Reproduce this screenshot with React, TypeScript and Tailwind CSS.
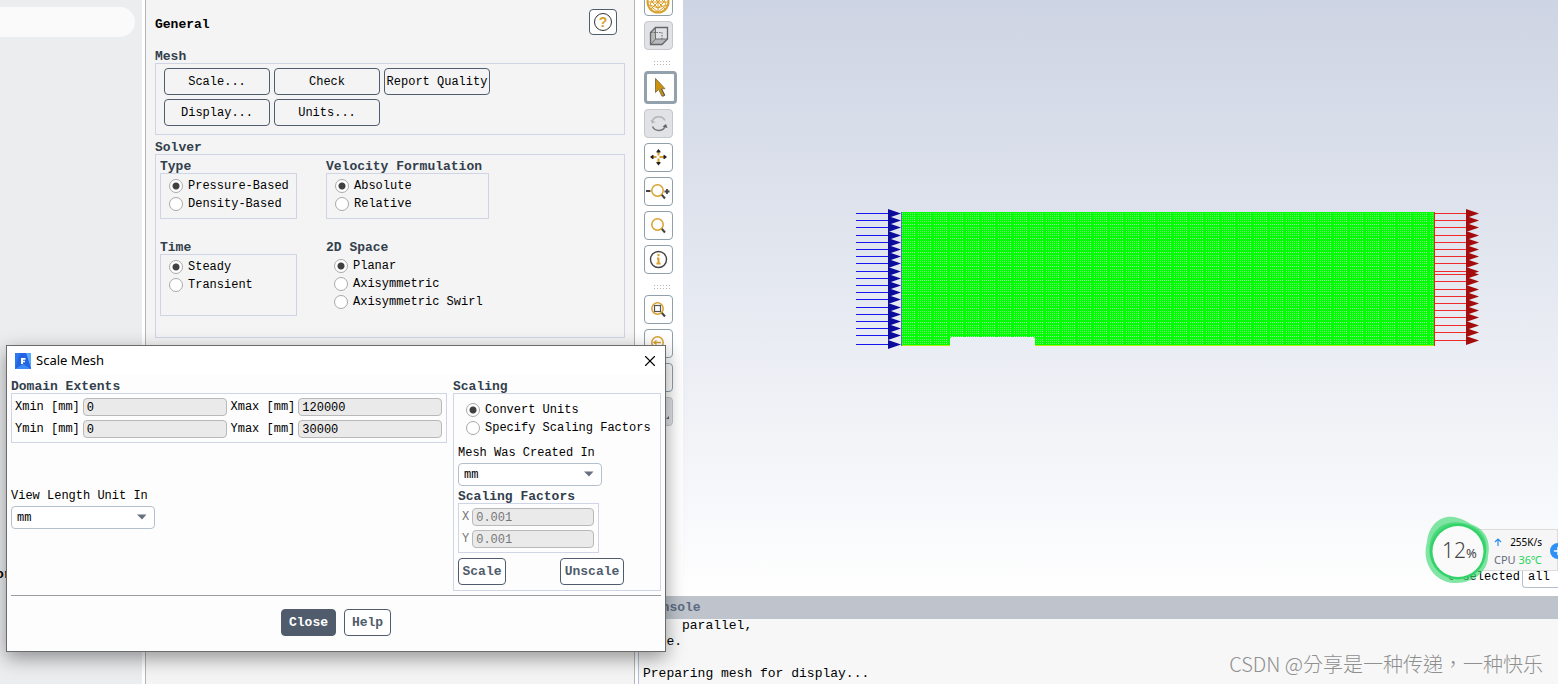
import type { ReactNode } from "react";
import { X, Plus } from "lucide-react";

const MONO = "font-['Liberation_Mono','Noto_Sans_CJK_SC',monospace]";

function Caption({ children }: { children: ReactNode }) {
  return <h3 className="h-4 text-[13px] leading-5 font-bold whitespace-nowrap text-[#333f4d]">{children}</h3>;
}

function Radio({ name, label, checked }: { name: string; label: string; checked?: boolean }) {
  return (
    <label className="flex h-[18px] items-center gap-[5px] text-xs whitespace-nowrap text-black">
      <input
        type="radio"
        name={name}
        defaultChecked={checked}
        className="size-3.5 shrink-0 appearance-none rounded-full border border-[#a9a9a9] bg-white checked:bg-[radial-gradient(circle,#404040_0_3px,#ffffff_4px)]"
      />
      {label}
    </label>
  );
}

function PanelButton({ children }: { children: ReactNode }) {
  return (
    <button className="h-[27px] w-[106px] rounded border border-[#4f5d6e] text-xs whitespace-nowrap text-black">
      {children}
    </button>
  );
}

function BoldButton({ children, className }: { children: ReactNode; className: string }) {
  return (
    <button className={`h-[27px] rounded border border-[#505c6b] text-[13px] font-bold ${className}`}>{children}</button>
  );
}

function Field({ label, value, disabled }: { label: string; value: string; disabled?: boolean }) {
  return (
    <label className={`flex min-w-0 flex-1 items-center gap-[3px] text-xs whitespace-pre ${disabled ? "text-[#777]" : "text-black"}`}>
      <span className="shrink-0">{label}</span>
      <input
        readOnly
        disabled={disabled}
        defaultValue={value}
        className="h-[18px] w-full min-w-0 flex-1 rounded border border-[#b9b9b9] bg-[#eaeaea] px-[3px] pt-[2px]"
      />
    </label>
  );
}

function UnitSelect({ label }: { label: string }) {
  return (
    <label className="block w-36 text-xs text-black">
      <span className="block h-[18px] leading-4 whitespace-nowrap">{label}</span>
      <span className="relative block">
        <select className="h-[23px] w-full appearance-none rounded border border-[#b4c0cd] bg-white px-[5px] pt-px">
          <option>mm</option>
          <option>m</option>
        </select>
        <svg className="pointer-events-none absolute top-2 right-2" width="10" height="6" viewBox="0 0 10 6">
          <path d="M0 0.5h9.500L5 5.500z" fill="#667080" />
        </svg>
      </span>
    </label>
  );
}

function ToolButton({ label, variant = "plain", children }: { label: string; variant?: "plain" | "muted" | "active"; children?: ReactNode }) {
  const look = {
    plain: "size-[29px] border border-[#8f9fac] bg-white",
    muted: "size-[29px] border border-[#c6c8cc] bg-[#e1e2e6]",
    active: "size-[33px] border-[3px] border-[#93a1ad] bg-white",
  }[variant];
  return (
    <button aria-label={label} className={`flex shrink-0 items-center justify-center rounded ${look}`}>
      {children}
    </button>
  );
}

function Grip() {
  return (
    <svg className="ml-[9px] shrink-0" width="18" height="11" viewBox="0 0 18 11">
      {[0, 3, 6, 9, 12, 15].map((x) => (
        <g key={x} fill="#b5b5b5">
          <rect x={x + 1} y="6" width="1" height="1" />
          <rect x={x + 1} y="9" width="1" height="1" />
        </g>
      ))}
    </svg>
  );
}

const GOLD = "#d9a02c";

function Magnifier({ children }: { children?: ReactNode }) {
  return (
    <svg width="27" height="27" viewBox="0 0 27 27" fill="none">
      <path d="M16.500 16.500l3.500 4" stroke="#444" strokeWidth="2" />
      <circle cx="12.500" cy="12.500" r="5.700" stroke={GOLD} strokeWidth="1.500" />
      {children}
    </svg>
  );
}

function Toolbar() {
  return (
    <div className="flex w-[47px] shrink-0 flex-col items-start gap-[5px] overflow-hidden bg-white pl-2">
      <div className="-mt-[13px]">
        <ToolButton label="Mesh display">
          <svg width="27" height="27" viewBox="0 0 27 27" fill="none" stroke={GOLD}>
            <circle cx="13" cy="14" r="10.500" strokeWidth="2" />
            <path d="M13 4v20M3 14h20M6 7l14 14M20 7L6 21M13 8l6 6-6 6-6-6zM4 17l9 7 9-7M8 9l-3 8 8 3 8-3-3-8" />
          </svg>
        </ToolButton>
      </div>
      <ToolButton label="Projection" variant="muted">
        <svg width="20" height="20" viewBox="0 0 20 20" fill="none" stroke="#666">
          <path d="M1.500 6.500L6.500 1.500v11.500h12l-5.500 5.500H1.500z" fill="#b9b9bb" stroke="none" />
          <path d="M6.500 1.500h12V13L13 18.500H1.500v-12z" strokeWidth="1.300" />
          <path d="M6.500 1.500V13M6.500 13h12M6.500 13l-5 5.500" strokeWidth="0.900" />
          <path d="M2 6.500h11v8" strokeDasharray="1.500 1.200" />
        </svg>
      </ToolButton>
      <Grip />
      <ToolButton label="Select" variant="active">
        <svg width="27" height="27" viewBox="0 0 27 27">
          <path d="M8.500 4.500v14l3.200-3.200 3.200 6.700 2.600-1.300-3.200-6h3.700z" fill="#cb920e" stroke="#8d7442" strokeWidth="1" />
          <path d="M14.500 15l3.300 6.400-2.300 1" fill="none" stroke="#555" strokeWidth="1" />
        </svg>
      </ToolButton>
      <ToolButton label="Rotate" variant="muted">
        <svg width="20" height="20" viewBox="0 0 20 20" fill="none" strokeWidth="1.500">
          <path d="M3 8a7 7 0 0 1 13-1.500" stroke="#b4b4b6" />
          <path d="M1.500 6l1.500 3.500L6.500 8z" fill="#b4b4b6" />
          <path d="M3.500 12.500a7 7 0 0 0 13-1" stroke="#777" />
          <path d="M13.500 12.500l3.500-2.500 1.500 4z" fill="#666" />
        </svg>
      </ToolButton>
      <ToolButton label="Pan">
        <svg width="19" height="19" viewBox="0 0 19 19">
          <path d="M9.500 3v4.500M9.500 10.500V16M3 9h4.500M10.500 9H16" stroke={GOLD} strokeWidth="2" />
          <path d="M9.500 1l2 2.500v1h-4v-1zM9.500 17.500l2-2.500v-1h-4v1zM1 9l2.500-2h1v4h-1zM18 9l-2.500-2h-1v4h1z" fill="#222" />
        </svg>
      </ToolButton>
      <ToolButton label="Zoom in and out">
        <Magnifier>
          <path d="M1 13h4.500M19.500 13.500h5M22 11v5" stroke="#444" strokeWidth="1.800" />
        </Magnifier>
      </ToolButton>
      <ToolButton label="Zoom">
        <Magnifier />
      </ToolButton>
      <ToolButton label="Information">
        <svg width="19" height="19" viewBox="0 0 19 19" fill="none">
          <circle cx="9.500" cy="9.500" r="8" stroke="#444" strokeWidth="1.400" />
          <path d="M9.500 8v6M8 8.500h2M7.500 13.500h4M9.500 4v2.300" stroke={GOLD} strokeWidth="2" />
        </svg>
      </ToolButton>
      <Grip />
      <ToolButton label="Zoom to area">
        <Magnifier>
          <rect x="9.500" y="9.500" width="6" height="6" stroke="#555" strokeWidth="1.200" />
        </Magnifier>
      </ToolButton>
      <ToolButton label="Previous view">
        <Magnifier>
          <path d="M9 12.500h7M11.500 10.500l-2.500 2 2.500 2" stroke={GOLD} strokeWidth="1.300" />
        </Magnifier>
      </ToolButton>
      <ToolButton label="Views" />
      <ToolButton label="More views" variant="muted">
        <svg width="27" height="27" viewBox="0 0 27 27">
          <path d="M24 18v3h-3z" fill="#666" />
        </svg>
      </ToolButton>
    </div>
  );
}

const INLET = [213, 220, 227, 235, 242, 249, 256, 263, 271, 278, 285, 292, 299, 307, 314, 321, 328, 335, 344];
const OUTLET = [213, 220, 227, 235, 242, 249, 256, 263, 271, 274, 281, 289, 296, 303, 310, 317, 325, 332, 340];

function MeshView() {
  return (
    <svg className="block h-full w-full" viewBox="683 0 875 566" role="img" aria-label="Mesh with inlet and outlet arrows">
      <defs>
        <pattern id="fine" width="16" height="14" patternUnits="userSpaceOnUse" x="901" y="212">
          <rect width="16" height="14" fill="#00ff00" />
          {[1, 3, 5, 7, 9, 11, 13].map((x) =>
            [1, 3, 5, 7, 9, 12].map((y) => (
              <rect key={`${x}-${y}`} x={x} y={y} width="1" height="1" fill="#b4d4bc" fillOpacity={y === 12 || x === 13 ? 0.95 : 0.65} />
            )),
          )}
        </pattern>
      </defs>
      <path d="M901 212H1435V346H1035V339q0-2-2-2H952q-2 0-2 2V346H901z" fill="url(#fine)" />
      <path d="M901 345.500h49M1035 345.500h400" stroke="#b6e812" />
      <path d="M901.500 212v134" stroke="#5a6cc8" />
      <path d="M1434.500 212v134" stroke="#e02810" />
      {INLET.map((y) => (
        <g key={y}>
          <path d={`M856 ${y + 0.5}h33`} stroke="#1616f0" />
          <path d={`M888 ${y - 4}L901 ${y + 0.5}L888 ${y + 5}z`} fill="#0b0b9c" />
        </g>
      ))}
      {OUTLET.map((y) => (
        <g key={y}>
          <path d={`M1435 ${y + 0.5}h32`} stroke="#f02a2a" />
          <path d={`M1466 ${y - 4}L1479 ${y + 0.5}L1466 ${y + 5}z`} fill="#a30d0d" />
        </g>
      ))}
    </svg>
  );
}

function GeneralPanel() {
  return (
    <section className="w-[490px] shrink-0 border-x border-[#b4b4b4] bg-[#f4f4f4] pt-[9px] pr-[9px] pl-[9px]">
      <header className="flex h-[26px] items-center justify-between pr-2">
        <h2 className="pt-1.5 text-[13px] font-bold text-black">General</h2>
        <button aria-label="Help" className="flex h-[26px] w-7 items-center justify-center rounded border border-[#4f5d6e] bg-white">
          <span className="flex size-[18px] items-center justify-center rounded-full border border-[#333] font-['Liberation_Sans',sans-serif] text-sm leading-none font-bold text-[#d9a02c]">
            ?
          </span>
        </button>
      </header>

      <div className="mt-3">
        <Caption>Mesh</Caption>
        <div className="flex h-[72px] flex-wrap content-start gap-1 border border-[#cfd5e5] pt-1 pr-24 pl-2">
          <PanelButton>Scale...</PanelButton>
          <PanelButton>Check</PanelButton>
          <PanelButton>Report Quality</PanelButton>
          <PanelButton>Display...</PanelButton>
          <PanelButton>Units...</PanelButton>
        </div>
      </div>

      <div className="mt-[3px]">
        <Caption>Solver</Caption>
        <div className="grid h-[184px] grid-cols-[137px_163px] content-start gap-x-[29px] gap-y-[19px] border border-[#cfd5e5] pt-[2px] pl-1">
          <div>
            <Caption>Type</Caption>
            <div className="h-[46px] border border-[#cfd5e5] pt-[3px] pl-2">
              <Radio name="type" label="Pressure-Based" checked />
              <Radio name="type" label="Density-Based" />
            </div>
          </div>
          <div>
            <Caption>Velocity Formulation</Caption>
            <div className="h-[46px] border border-[#cfd5e5] pt-[3px] pl-2">
              <Radio name="velocity" label="Absolute" checked />
              <Radio name="velocity" label="Relative" />
            </div>
          </div>
          <div>
            <Caption>Time</Caption>
            <div className="h-[62px] border border-[#cfd5e5] pt-[3px] pl-2">
              <Radio name="time" label="Steady" checked />
              <Radio name="time" label="Transient" />
            </div>
          </div>
          <div>
            <Caption>2D Space</Caption>
            <div className="pt-[3px] pl-2">
              <Radio name="space" label="Planar" checked />
              <Radio name="space" label="Axisymmetric" />
              <Radio name="space" label="Axisymmetric Swirl" />
            </div>
          </div>
        </div>
      </div>
    </section>
  );
}

function ScaleMeshDialog() {
  return (
    <div
      role="dialog"
      aria-label="Scale Mesh"
      className="absolute top-[345px] left-[6px] w-[660px] border border-[#6b6b6b] bg-[#fdfdfd] shadow-[0_6px_18px_rgba(0,0,0,0.4)]"
    >
      <header className="flex h-[29px] items-center bg-white pr-[6px] pl-2">
        <svg width="16" height="16" viewBox="0 0 16 16">
          <rect width="16" height="16" fill="#2c78ee" />
          <path d="M11 0h5v16z" fill="#55a8fb" />
          <path d="M0 16L5 0h6l5 16z" fill="#2563e0" />
          <path d="M0 16l8-5 8 5z" fill="#3b8af5" />
          <path d="M6 5h4.500v1.700H8v1h2v1.500H8V11H6z" fill="#fff" />
        </svg>
        <h2 className="ml-[5px] flex-1 font-['Noto_Sans',sans-serif] text-[13px] text-black">Scale Mesh</h2>
        <button aria-label="Close dialog">
          <X size={18} strokeWidth={1.5} color="#000" />
        </button>
      </header>

      <div className="flex gap-[6px] px-1 pt-[2px]">
        <div className="w-[436px]">
          <Caption>Domain Extents</Caption>
          <div className="grid h-[50px] grid-cols-2 content-start gap-x-1 gap-y-1 border border-[#cfd5e5] py-1 pr-1 pl-[3px]">
            <Field label="Xmin [mm]" value="0" />
            <Field label="Xmax [mm]" value="120000" />
            <Field label="Ymin [mm]" value="0" />
            <Field label="Ymax [mm]" value="30000" />
          </div>
          <div className="mt-[45px]">
            <UnitSelect label="View Length Unit In" />
          </div>
        </div>

        <div className="min-w-0 flex-1">
          <Caption>Scaling</Caption>
          <div className="h-[198px] border border-[#cfd5e5] pt-[7px] pl-1">
            <div className="pl-2">
              <Radio name="scaling" label="Convert Units" checked />
              <Radio name="scaling" label="Specify Scaling Factors" />
            </div>
            <div className="mt-2">
              <UnitSelect label="Mesh Was Created In" />
            </div>
            <div className="mt-px w-[141px]">
              <Caption>Scaling Factors</Caption>
              <div className="flex h-[50px] flex-col gap-1 border border-[#cfd5e5] p-1 pl-[3px]">
                <Field label="X" value="0.001" disabled />
                <Field label="Y" value="0.001" disabled />
              </div>
            </div>
            <div className="mt-[5px] flex justify-between pr-9">
              <BoldButton className="w-12 bg-white text-[#505c6b]">Scale</BoldButton>
              <BoldButton className="w-16 bg-white text-[#505c6b]">Unscale</BoldButton>
            </div>
          </div>
        </div>
      </div>

      <hr className="mx-1 mt-1 border-[#9a9aa0]" />
      <footer className="flex justify-center gap-2 pt-[13px] pr-0 pb-[15px]">
        <BoldButton className="w-[55px] bg-[#505c6b] text-white">Close</BoldButton>
        <BoldButton className="w-[47px] bg-white text-[#505c6b]">Help</BoldButton>
      </footer>
    </div>
  );
}

function SystemMonitor() {
  return (
    <aside className="absolute top-[516px] right-0 flex h-[68px] w-[134px] items-center overflow-hidden font-['Noto_Sans',sans-serif]">
      <div className="ml-8 flex h-[42px] flex-1 flex-col justify-center border border-[#dcdcdc] bg-[#f6f6f6] pt-[2px] pl-[37px] text-[11px] leading-[18px] whitespace-nowrap">
        <div className="flex w-12 items-center justify-between text-[10px] text-black">
          <svg width="8" height="8" viewBox="0 0 8 8" fill="none" stroke="#2b8cf0" strokeWidth="1.200">
            <path d="M4 8V1M1 4l3-3 3 3" />
          </svg>
          <span>255K/s</span>
        </div>
        <div className="text-[#666b80]">
          CPU <span className="text-[#1fd45c]">36℃</span>
        </div>
      </div>
      <svg className="absolute top-0 left-0" width="68" height="68" viewBox="0 0 68 68">
        <path d="M3 26C5 6 20-3 34 2c7 2 9 4 15 7 13 5 18 17 15 31 0 16-15 27-32 27C10 67-3 46 3 26z" fill="#3fd873" fillOpacity="0.650" />
        <path d="M6 26C10 10 24 4 38 7c16 2 27 14 24 30-3 16-14 25-29 25C14 62 2 46 6 26z" fill="#2fd267" fillOpacity="0.600" />
        <circle cx="34" cy="35.500" r="28" fill="#2fd267" fillOpacity="0.900" />
        <circle cx="34" cy="35.500" r="25.500" fill="#fafafa" />
      </svg>
      <div className="absolute top-[18px] left-[18px] flex h-8 items-baseline text-[#444]">
        <span className="text-[21px] leading-8 font-light">12</span>
        <span className="text-[13px]">%</span>
      </div>
      <span className="absolute top-[27px] -right-2 flex size-4 items-center justify-center rounded-full bg-[#2f90f5]">
        <Plus size={12} strokeWidth={3} color="#fff" />
      </span>
    </aside>
  );
}

export default function App() {
  return (
    <main className={`relative flex h-screen overflow-hidden bg-white ${MONO}`}>
      <nav className="flex w-[142px] shrink-0 flex-col justify-between bg-[#ecedef] pt-[7px] pb-[99px]">
        <input aria-label="Filter" className="h-[30px] w-[135px] rounded-r-full bg-[#fafafa]" />
        <span className="-ml-1 text-[13px] leading-5 font-bold text-black">or</span>
      </nav>
      <div className="w-[3px] shrink-0 bg-white" />
      <GeneralPanel />

      <div className="flex min-w-0 flex-1 flex-col">
        <div className="flex min-h-0 flex-1">
          <div className="w-px bg-white" />
          <Toolbar />
          <div className="flex min-w-0 flex-1 flex-col bg-linear-to-b from-[#cdd4e3] to-white">
            <div className="min-h-0 flex-1">
              <MeshView />
            </div>
            <div className="flex h-[30px] shrink-0 items-center justify-end gap-[2px] overflow-hidden text-xs text-black">
              <label htmlFor="selection" className="-mt-[9px]">
                0 selected
              </label>
              <select id="selection" className="-mt-2 h-[22px] w-[36px] appearance-none rounded-l border border-r-0 border-[#b4c0cd] bg-white pl-[5px]">
                <option>all</option>
              </select>
            </div>
          </div>
        </div>
        <section className="ml-[3px] h-[88px] shrink-0 border-l border-[#b4c0d8] bg-[#f7f7f7]">
          <h2 className="h-[23px] bg-[#bfc4cc] pl-[7px] text-[13px] leading-[23px] font-bold text-[#5c6b82]">Console</h2>
          <pre className={`-mt-px pl-1 text-[13px] leading-4 text-black ${MONO}`}>{"     parallel,\nDone.\n\nPreparing mesh for display..."}</pre>
        </section>
      </div>

      <ScaleMeshDialog />
      <SystemMonitor />
      <p className="pointer-events-none absolute right-[15px] bottom-[6px] font-['Noto_Sans_CJK_TC',sans-serif] text-xl font-light whitespace-nowrap text-[#8f8f8f]">
        CSDN @分享是一种传递，一种快乐
      </p>
    </main>
  );
}
